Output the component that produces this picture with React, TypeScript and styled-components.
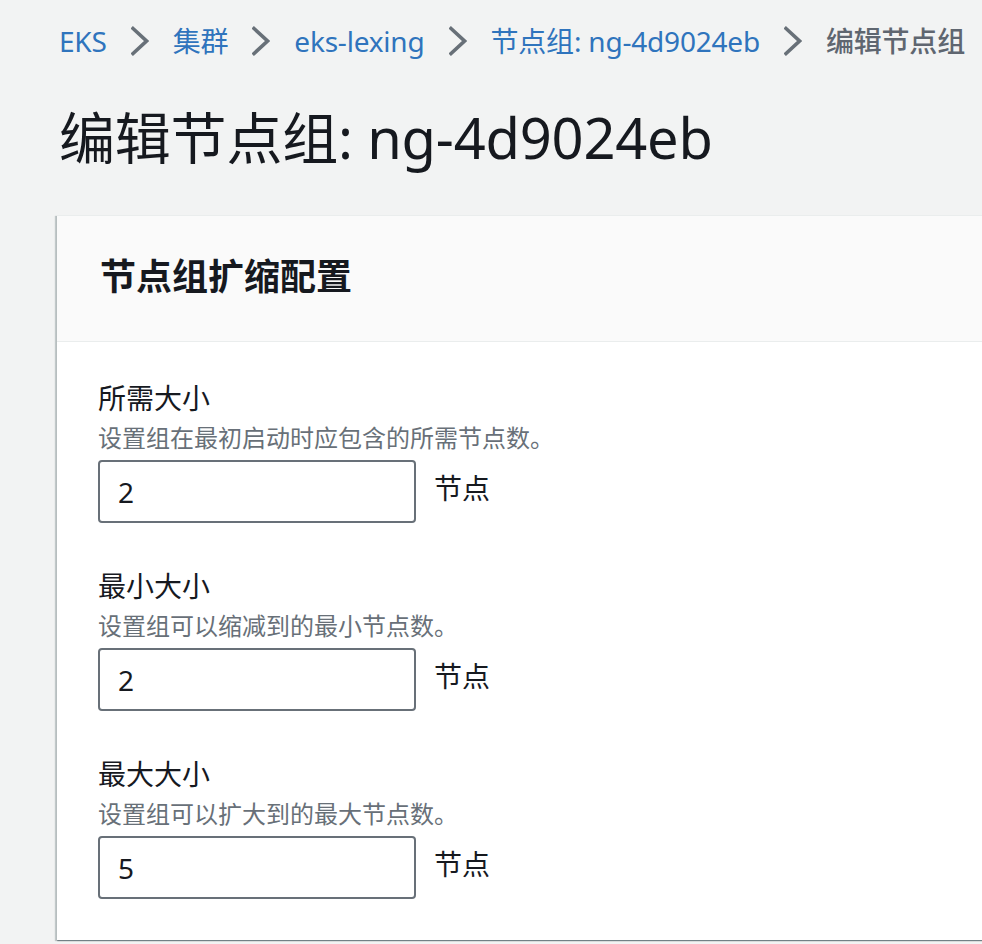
import React from "react";
import styled, { createGlobalStyle } from "styled-components";

const Global = createGlobalStyle`
  html, body { margin: 0; padding: 0; }
  body {
    background: #f2f3f3;
    overflow: hidden;
    font-family: "Noto Sans", "Noto Sans CJK SC", sans-serif;
    color: #16191f;
  }
`;

const Page = styled.div`
  padding: 21px 0 0 57px;
  width: 982px;
  height: 944px;
  box-sizing: border-box;
`;

const Breadcrumbs = styled.nav`
  display: flex;
  align-items: center;
  gap: 24px;
  padding-left: 2px;
  height: 40px;
  font-size: 28px;
  line-height: 40px;
  white-space: nowrap;
`;

const Crumb = styled.span<{ $current?: boolean }>`
  color: ${(p) => (p.$current ? "#5f6670" : "#2f74bd")};
  font-weight: ${(p) => (p.$current ? 500 : 400)};
  letter-spacing: -0.2px;
`;

const Chevron = styled.svg`
  flex: none;
  display: block;
`;

const Title = styled.h1`
  margin: 40px 0 0 2px;
  font-size: 56px;
  line-height: 72px;
  font-weight: 400;
  color: #16191f;
  white-space: nowrap;
  letter-spacing: -0.2px;
`;

const Card = styled.section`
  margin-top: 42px;
  margin-right: -30px;
  background: #ffffff;
  box-shadow: 0 1px 1px 0 rgba(0, 28, 36, 0.3),
    1px 1px 1px 0 rgba(0, 28, 36, 0.15), -2px 1px 1px 0 rgba(0, 28, 36, 0.2);
  border-top: 1px solid #eaeded;
`;

const CardHeader = styled.header`
  height: 126px;
  box-sizing: border-box;
  background: #fafafa;
  border-bottom: 1px solid #eaeded;
  display: flex;
  align-items: center;
  padding: 0 43px 4px;
`;

const CardTitle = styled.h2`
  margin: 0;
  font-size: 36px;
  line-height: 48px;
  font-weight: 700;
  color: #16191f;
`;

const CardBody = styled.div`
  padding: 36px 41px 41px;
  display: flex;
  flex-direction: column;
  gap: 43px;
`;

const Field = styled.div`
  display: flex;
  flex-direction: column;
`;

const Label = styled.label`
  font-size: 28px;
  line-height: 40px;
  color: #16191f;
`;

const Description = styled.div`
  margin-top: 4px;
  font-size: 24px;
  line-height: 32px;
  color: #687078;
`;

const Row = styled.div`
  margin-top: 6px;
  display: flex;
  align-items: center;
  gap: 18px;
`;

const Input = styled.input`
  width: 318px;
  height: 63px;
  box-sizing: border-box;
  border: 2px solid #687078;
  border-radius: 4px;
  padding: 0 18px;
  font-family: "Noto Sans", "Noto Sans CJK SC", sans-serif;
  font-size: 28px;
  color: #16191f;
  background: #fff;
  outline: none;
`;

const Unit = styled.span`
  font-size: 28px;
  line-height: 40px;
  color: #16191f;
  margin-top: -7px;
`;

const Sep = () => (
  <Chevron width="18" height="30" viewBox="0 0 18 30">
    <polyline
      points="2,2.5 15.5,15 2,27.5"
      fill="none"
      stroke="#687078"
      strokeWidth="3.6"
      strokeLinecap="square"
      strokeLinejoin="miter"
    />
  </Chevron>
);

const fields = [
  { label: "所需大小", desc: "设置组在最初启动时应包含的所需节点数。", value: "2" },
  { label: "最小大小", desc: "设置组可以缩减到的最小节点数。", value: "2" },
  { label: "最大大小", desc: "设置组可以扩大到的最大节点数。", value: "5" },
];

export default function App() {
  return (
    <>
      <Global />
      <Page>
        <Breadcrumbs>
          <Crumb>EKS</Crumb>
          <Sep />
          <Crumb>集群</Crumb>
          <Sep />
          <Crumb>eks-lexing</Crumb>
          <Sep />
          <Crumb>节点组: ng-4d9024eb</Crumb>
          <Sep />
          <Crumb $current>编辑节点组</Crumb>
        </Breadcrumbs>
        <Title>编辑节点组: ng-4d9024eb</Title>
        <Card>
          <CardHeader>
            <CardTitle>节点组扩缩配置</CardTitle>
          </CardHeader>
          <CardBody>
            {fields.map((f) => (
              <Field key={f.label}>
                <Label>{f.label}</Label>
                <Description>{f.desc}</Description>
                <Row>
                  <Input defaultValue={f.value} />
                  <Unit>节点</Unit>
                </Row>
              </Field>
            ))}
          </CardBody>
        </Card>
      </Page>
    </>
  );
}
